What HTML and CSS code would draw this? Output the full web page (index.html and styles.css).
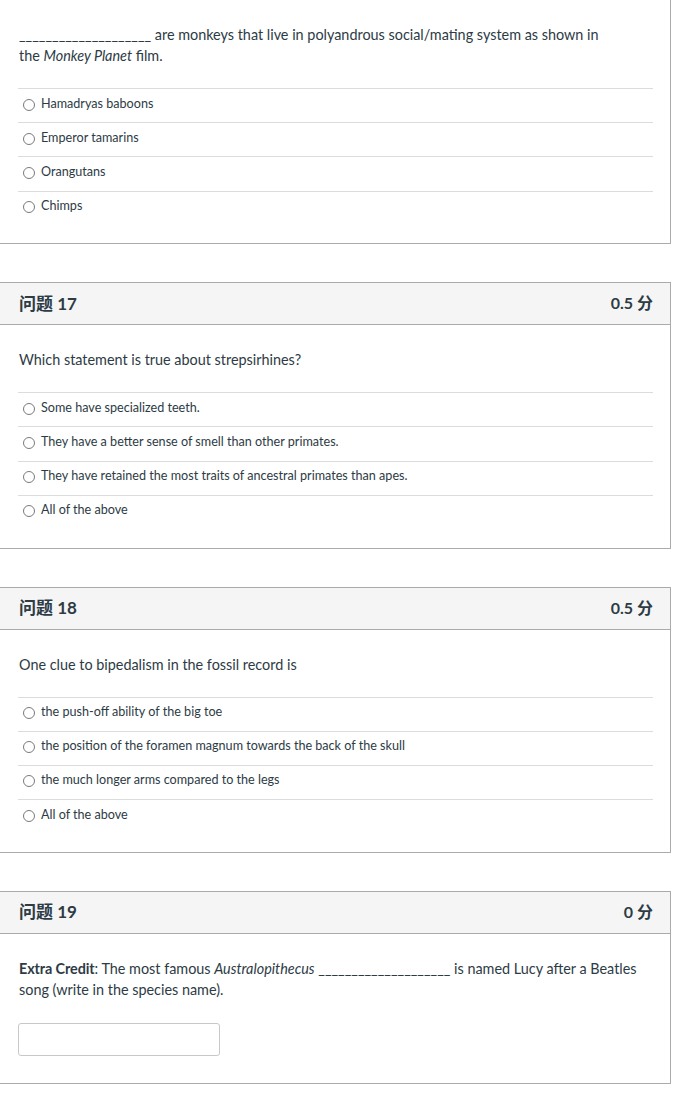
FILE: index.html
```html
<!DOCTYPE html>
<html lang="zh">
<head>
<meta charset="utf-8">
<title>Quiz</title>
<link rel="stylesheet" href="styles.css">
</head>
<body>
<div class="quiz">
  <div class="card card-first">
    <div class="body">
      <div class="qtext">____________________ are monkeys that live in polyandrous social/mating system as shown in<br>the <em>Monkey Planet</em> film.</div>
      <div class="answers">
        <div class="answer"><span class="radio"></span><span class="label">Hamadryas baboons</span></div>
        <div class="answer"><span class="radio"></span><span class="label">Emperor tamarins</span></div>
        <div class="answer"><span class="radio"></span><span class="label">Orangutans</span></div>
        <div class="answer"><span class="radio"></span><span class="label">Chimps</span></div>
      </div>
    </div>
  </div>

  <div class="card">
    <div class="header"><span class="name">问题 17</span><span class="points">0.5 分</span></div>
    <div class="body">
      <div class="qtext">Which statement is true about strepsirhines?</div>
      <div class="answers">
        <div class="answer"><span class="radio"></span><span class="label">Some have specialized teeth.</span></div>
        <div class="answer"><span class="radio"></span><span class="label">They have a better sense of smell than other primates.</span></div>
        <div class="answer"><span class="radio"></span><span class="label">They have retained the most traits of ancestral primates than apes.</span></div>
        <div class="answer"><span class="radio"></span><span class="label">All of the above</span></div>
      </div>
    </div>
  </div>

  <div class="card">
    <div class="header"><span class="name">问题 18</span><span class="points">0.5 分</span></div>
    <div class="body">
      <div class="qtext">One clue to bipedalism in the fossil record is</div>
      <div class="answers">
        <div class="answer"><span class="radio"></span><span class="label">the push-off ability of the big toe</span></div>
        <div class="answer"><span class="radio"></span><span class="label">the position of the foramen magnum towards the back of the skull</span></div>
        <div class="answer"><span class="radio"></span><span class="label">the much longer arms compared to the legs</span></div>
        <div class="answer"><span class="radio"></span><span class="label">All of the above</span></div>
      </div>
    </div>
  </div>

  <div class="card">
    <div class="header"><span class="name">问题 19</span><span class="points">0 分</span></div>
    <div class="body body-input">
      <div class="qtext"><strong>Extra Credit</strong>: The most famous <em>Australopithecus</em> ____________________ is named Lucy after a Beatles<br>song (write in the species name).</div>
      <div class="input-box"></div>
    </div>
  </div>
</div>
</body>
</html>
```

FILE: styles.css
```css
html, body {
  margin: 0;
  padding: 0;
  background: #ffffff;
}

body {
  font-family: Lato, "Noto Sans CJK SC", sans-serif;
  color: #2d3b45;
}

.quiz {
  display: flex;
  flex-direction: column;
  gap: 38px;
  width: 672px;
  margin-left: -1px;
}

.card {
  border: 1px solid #ababab;
  background: #ffffff;
}

.card-first {
  border-top: none;
}

.header {
  display: flex;
  justify-content: space-between;
  align-items: center;
  height: 41px;
  box-sizing: border-box;
  padding: 0 17px 3px 19px;
  background: #f5f5f5;
  border-bottom: 1px solid #ababab;
  font-weight: bold;
  font-size: 17px;
  color: #2d3b45;
}

.header {
  height: 42px;
}

.points {
  font-size: 16px;
}

.body {
  padding: 24px 17px 18.5px 18px;
}

.qtext {
  font-size: 14.4px;
  line-height: 21px;
  padding-left: 1px;
}

.qtext strong {
  letter-spacing: -0.1px;
}

.answers {
  margin-top: 22px;
  display: flex;
  flex-direction: column;
}

.answer {
  display: flex;
  align-items: center;
  border-top: 1px solid #dcdcdc;
  padding: 5.6px 0 9.6px;
  font-size: 12.6px;
  line-height: 18px;
}

.radio {
  width: 12px;
  height: 12px;
  box-sizing: border-box;
  border: 1px solid #7a7a7a;
  border-radius: 50%;
  margin-left: 5px;
  margin-right: 6px;
  margin-top: 2px;
  flex: none;
}

.body-input {
  padding-bottom: 27px;
}

.input-box {
  margin-top: 23px;
  width: 202px;
  height: 33px;
  box-sizing: border-box;
  border: 1px solid #c8c8c8;
  border-radius: 3px;
  background: #ffffff;
}
```
